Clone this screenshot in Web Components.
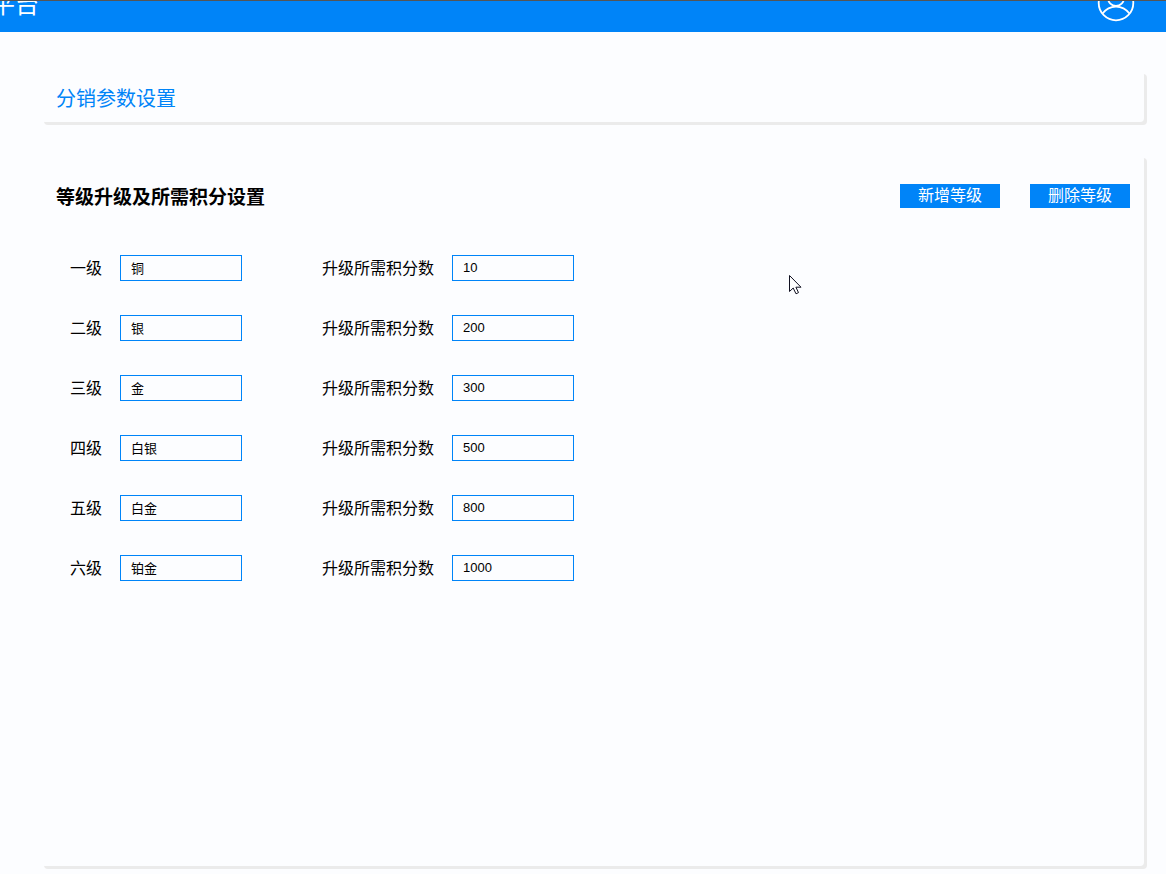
<!DOCTYPE html>
<html lang="zh-CN">
<head>
<meta charset="utf-8">
<title>分销参数设置</title>
<style>
  body {
    margin: 0;
    background: #fcfdff;
    color: #000;
    font-family: "Liberation Sans", "Noto Sans CJK SC", sans-serif;
    font-size: 16px;
  }
</style>
</head>
<body>
<distribution-page></distribution-page>

<script>
const define = (name, html, attributes = {}) => {
  const template = document.createElement('template');
  template.innerHTML = html;
  customElements.define(name, class extends HTMLElement {
    static observedAttributes = Object.keys(attributes);
    constructor() {
      super();
      this.attachShadow({ mode: 'open' }).append(template.content.cloneNode(true));
    }
    attributeChangedCallback(key, before, value) {
      attributes[key](this.shadowRoot, value);
    }
  });
};

define('top-bar', `
  <style>
    :host {
      display: flex;
      justify-content: space-between;
      align-items: flex-end;
      box-sizing: border-box;
      height: 32px;
      padding-right: 31px;
      overflow: hidden;
      background: #0084f8;
      border-top: 1px solid #555;
      color: #fff;
    }
    .brand { margin-left: -9px; padding-bottom: 10px; font-size: 24px; line-height: 34px; white-space: nowrap; }
    svg { display: block; flex: none; margin-bottom: 10px; }
  </style>
  <span class="brand"><slot></slot></span>
  <svg width="38" height="38" viewBox="0 0 38 38" fill="none" stroke="#fff" stroke-width="1.800" role="img" aria-label="用户">
    <circle cx="19" cy="19" r="17.3"/>
    <circle cx="19" cy="14" r="8"/>
    <path d="M5.500 29.500C12.500 20.200 25.500 20.200 32.500 29.500"/>
  </svg>
`);

define('panel-card', `
  <style>
    :host {
      display: block;
      box-sizing: border-box;
      border-radius: 4px;
      background: #fcfdff;
      box-shadow: 3px 3px 0 #ebebeb;
    }
  </style>
  <slot></slot>
`);

define('action-button', `
  <style>
    :host { display: block; }
    button {
      display: block;
      width: 100px;
      height: 24px;
      padding: 0;
      border: 0;
      background: #0084f8;
      color: #fff;
      font: inherit;
      line-height: 24px;
      cursor: pointer;
    }
  </style>
  <button type="button"><slot></slot></button>
`);

define('text-field', `
  <style>
    :host { display: flex; align-items: center; gap: 18px; }
    label { padding-top: 2px; line-height: 26px; white-space: nowrap; }
    input {
      box-sizing: border-box;
      width: 122px;
      height: 26px;
      padding: 0 10px 2px;
      border: 1px solid #0084f8;
      border-radius: 0;
      background: transparent;
      color: #000;
      font-family: inherit;
      font-size: 13px;
      outline: none;
    }
  </style>
  <label for="field"></label>
  <input id="field" type="text">
`, {
  label: (root, value) => { root.querySelector('label').textContent = value; },
  value: (root, value) => { root.querySelector('input').value = value; },
});

define('level-row', `
  <style>
    :host { display: flex; gap: 80px; }
  </style>
  <text-field class="name"></text-field>
  <text-field class="points" label="升级所需积分数"></text-field>
`, {
  level: (root, value) => root.querySelector('.name').setAttribute('label', value),
  name: (root, value) => root.querySelector('.name').setAttribute('value', value),
  points: (root, value) => root.querySelector('.points').setAttribute('value', value),
});

define('mouse-pointer', `
  <style>
    :host { display: block; position: absolute; left: 789px; top: 275px; pointer-events: none; }
    svg { display: block; }
  </style>
  <svg width="13" height="20" viewBox="0 0 13 20" aria-hidden="true">
    <path d="M.5.5V16.500L4.200 13L7 18.800L9.500 17.600L6.900 12.200H12Z" fill="#fff" stroke="#101020" stroke-width="1"/>
  </svg>
`);

define('distribution-page', `
  <style>
    :host { display: flex; flex-direction: column; min-height: 100vh; position: relative; }
    main {
      flex: 1;
      display: flex;
      flex-direction: column;
      gap: 33px;
      padding: 39px 22px 8px 41px;
    }
    .title { padding: 14px 15px 9px; }
    .settings { flex: 1; padding: 29px 14px 28px 15px; }
    h1, h2 { margin: 0; }
    h1 { color: #0084f8; font-size: 20px; font-weight: 400; line-height: 28px; }
    h2 { flex: 1; font-size: 19px; line-height: 28px; }
    .head { display: flex; align-items: flex-start; gap: 30px; }
    .rows { display: grid; gap: 32px; padding: 42px 14px 0; }
  </style>
  <top-bar>平台</top-bar>
  <main>
    <panel-card class="title"><h1>分销参数设置</h1></panel-card>
    <panel-card class="settings">
      <div class="head">
        <h2>等级升级及所需积分设置</h2>
        <action-button>新增等级</action-button>
        <action-button>删除等级</action-button>
      </div>
      <div class="rows">
        <level-row level="一级" name="铜" points="10"></level-row>
        <level-row level="二级" name="银" points="200"></level-row>
        <level-row level="三级" name="金" points="300"></level-row>
        <level-row level="四级" name="白银" points="500"></level-row>
        <level-row level="五级" name="白金" points="800"></level-row>
        <level-row level="六级" name="铂金" points="1000"></level-row>
      </div>
    </panel-card>
  </main>
  <mouse-pointer></mouse-pointer>
`);
</script>
</body>
</html>
